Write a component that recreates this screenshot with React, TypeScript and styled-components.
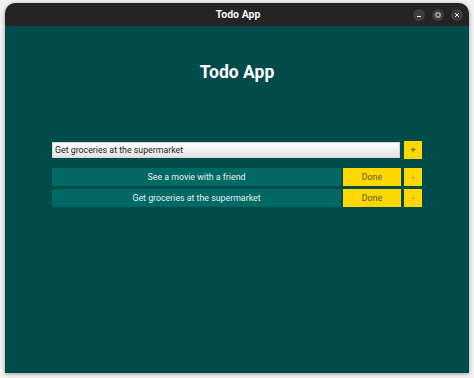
import React, { useState } from 'react'
import styled, { createGlobalStyle } from 'styled-components'

const GlobalStyle = createGlobalStyle`
    html, body {
        margin: 0;
        padding: 0;
        background: #ececec;
        font-family: Roboto, "Noto Sans", sans-serif;
    }
`;

const Desktop = styled.div`
    width: 474px;
    height: 378px;
    padding: 3px 5px 5px 5px;
    box-sizing: border-box;
    background: #f2f2f2;
`;

const Window = styled.div`
    width: 464px;
    height: 370px;
    display: flex;
    flex-direction: column;
    border-radius: 10px 10px 0 0;
    overflow: hidden;
    box-shadow: 0 1px 4px rgba(0, 0, 0, 0.35);
`;

const TitleBar = styled.div`
    height: 23px;
    flex: none;
    background: #242424;
    display: grid;
    grid-template-columns: 1fr auto 1fr;
    align-items: center;
    padding: 0 6px 0 8px;
`;

const WindowTitle = styled.div`
    grid-column: 2;
    color: #f4f4f4;
    font-size: 10.5px;
    font-weight: 700;
`;

const Controls = styled.div`
    grid-column: 3;
    justify-self: end;
    display: flex;
    gap: 7px;
`;

const ControlButton = styled.div`
    width: 12px;
    height: 12px;
    border-radius: 50%;
    background: #3d3d3d;
    display: flex;
    align-items: center;
    justify-content: center;
`;

const Content = styled.div`
    flex: 1;
    background: #014b4b;
    display: flex;
    flex-direction: column;
    padding: 0 47px;
`;

const Heading = styled.h1`
    margin: 35px 0 0;
    text-align: center;
    color: #ffffff;
    font-size: 17.5px;
    line-height: 22px;
    font-weight: 700;
`;

const InputRow = styled.div`
    margin-top: 58px;
    display: flex;
    align-items: center;
    gap: 4px;
`;

const TodoInput = styled.input`
    flex: 1;
    height: 16px;
    box-sizing: border-box;
    border: 1px solid #d6d6d6;
    background: linear-gradient(#ffffff, #e2e2e2);
    font-family: Roboto, "Noto Sans", sans-serif;
    font-size: 8.8px;
    color: #1c1c1c;
    padding: 0 2px;
    outline: none;
`;

const YellowButton = styled.button<{ $width: number }>`
    width: ${p => p.$width}px;
    height: 18px;
    flex: none;
    border: none;
    padding: 0;
    background: #ffd800;
    color: #56551c;
    font-family: Roboto, "Noto Sans", sans-serif;
    font-size: 8.8px;
    display: flex;
    align-items: center;
    justify-content: center;
    cursor: pointer;
`;

const TodoList = styled.div`
    margin-top: 9px;
    display: flex;
    flex-direction: column;
    gap: 3px;
`;

const TodoRow = styled.div`
    display: flex;
    align-items: center;
    gap: 3px;
`;

const TodoText = styled.div`
    flex: 1;
    height: 18px;
    margin-right: -1px;
    background: #026864;
    color: #e4f1ef;
    font-size: 8.8px;
    display: flex;
    align-items: center;
    justify-content: center;
`;

const App = () => {
    const [text, setText] = useState('Get groceries at the supermarket');
    const [todos, setTodos] = useState(['See a movie with a friend', 'Get groceries at the supermarket']);

    return (
        <>
            <GlobalStyle />
            <Desktop>
                <Window>
                    <TitleBar>
                        <WindowTitle>Todo App</WindowTitle>
                        <Controls>
                            <ControlButton>
                                <svg width="6" height="6" viewBox="0 0 6 6">
                                    <rect x="1" y="4" width="4" height="1" fill="#e8e8e8" />
                                </svg>
                            </ControlButton>
                            <ControlButton>
                                <svg width="6" height="6" viewBox="0 0 6 6">
                                    <rect x="1" y="1" width="4" height="4" rx="0.6" fill="none" stroke="#e8e8e8" strokeWidth="1" />
                                </svg>
                            </ControlButton>
                            <ControlButton>
                                <svg width="6" height="6" viewBox="0 0 6 6">
                                    <path d="M1 1 L5 5 M5 1 L1 5" stroke="#e8e8e8" strokeWidth="1" />
                                </svg>
                            </ControlButton>
                        </Controls>
                    </TitleBar>
                    <Content>
                        <Heading>Todo App</Heading>
                        <InputRow>
                            <TodoInput value={text} onChange={e => setText(e.target.value)} />
                            <YellowButton $width={18} onClick={() => text && setTodos([...todos, text])}>+</YellowButton>
                        </InputRow>
                        <TodoList>
                            {todos.map((todo, index) => (
                                <TodoRow key={index}>
                                    <TodoText>{todo}</TodoText>
                                    <YellowButton $width={58}>Done</YellowButton>
                                    <YellowButton $width={18} onClick={() => setTodos(todos.filter((_, i) => i !== index))}>-</YellowButton>
                                </TodoRow>
                            ))}
                        </TodoList>
                    </Content>
                </Window>
            </Desktop>
        </>
    );
}

export default App;
